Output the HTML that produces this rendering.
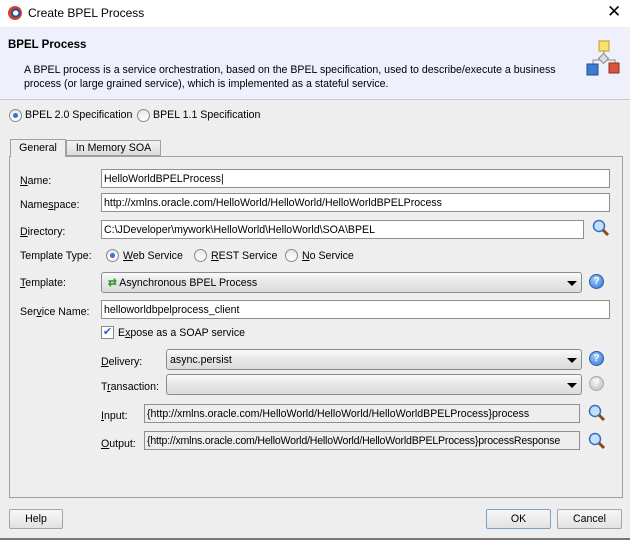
<!DOCTYPE html>
<html><head><style>
*{box-sizing:border-box;margin:0;padding:0}
body{width:630px;height:540px;background:#eeeeee;font-family:"Liberation Sans",sans-serif;font-size:10.6px;color:#000;position:relative;overflow:hidden}
.a{position:absolute;white-space:nowrap}
.l{margin-top:3px}
.inp{position:absolute;background:#fff;border:1px solid #8e8f8f;height:19px;padding:3px 2px 0;line-height:13px;overflow:hidden}
.ro{background:#eeeeee}
.cb{position:absolute;border:1px solid #8c8c8c;border-radius:3px;height:21px;background:linear-gradient(#fafafa,#e6e6e6 50%,#dcdcdc);padding:4px 6px 0;line-height:13px}
.arr{position:absolute;right:4px;top:8px;width:0;height:0;border-left:5px solid transparent;border-right:5px solid transparent;border-top:5px solid #000}
.rad{position:absolute;width:13px;height:13px;border:1px solid #8a8a8a;border-radius:50%;background:linear-gradient(#e8e8e8,#fff)}
.rad.on::after{content:"";position:absolute;left:3px;top:3px;width:5px;height:5px;border-radius:50%;background:#3a6fd0}
.help{position:absolute;width:15px;height:15px;border-radius:50%;background:radial-gradient(circle at 40% 35%,#9fd0ff,#2f6fd0);color:#fff;font-weight:bold;font-size:10px;text-align:center;line-height:14px;border:1px solid #2a5aa8}
.help.dis{background:radial-gradient(circle at 40% 35%,#f0f0f0,#bdbdbd);border-color:#aaa}
.btn{position:absolute;height:20px;border:1px solid #a5a5a5;border-radius:2px;background:linear-gradient(#f7f7f7,#e2e2e2);text-align:center;line-height:18px}
u{text-decoration:underline}
</style></head><body>
<div class="a" style="left:0;top:0;width:630px;height:27px;background:#fff"></div>
<div class="a" style="left:8px;top:6px;width:14px;height:14px;border-radius:50%;background:radial-gradient(circle at 55% 50%,#fff 0 25%,#1d4fb0 26% 45%,#e0401f 46%)"></div>
<div class="a" style="left:28px;top:6px;font-size:12px">Create BPEL Process</div>
<div class="a" style="left:607px;top:2px;font-size:17px">✕</div>
<div class="a" style="left:0;top:28px;width:630px;height:72px;background:#eef1fb;border-bottom:1px solid #c8c8c8"></div>
<div class="a" style="left:8px;top:39px;font-weight:bold;font-size:11.5px">BPEL Process</div>
<div class="a" style="left:24px;top:63px;line-height:14px">A BPEL process is a service orchestration, based on the BPEL specification, used to describe/execute a business<br>process (or large grained service), which is implemented as a stateful service.</div>
<svg class="a" style="left:586px;top:40px" width="36" height="38"><rect x="13" y="1" width="10" height="10" fill="#fbe36a" stroke="#b89a20"/><path d="M18 11v6M7 24v-4h22v4" stroke="#888" fill="none"/><rect x="14" y="15" width="7" height="7" transform="rotate(45 17.5 18.5)" fill="#ddd" stroke="#888"/><rect x="1" y="24" width="11" height="11" fill="#3b7bd0" stroke="#1d4f9a"/><rect x="23" y="23" width="10" height="10" fill="#d8553f" stroke="#9a2a1a"/></svg>
<div class="rad on" style="left:9px;top:109px"></div><div class="a" style="left:25px;top:109px">BPEL 2.0 Specification</div>
<div class="rad" style="left:137px;top:109px"></div><div class="a" style="left:153px;top:109px">BPEL 1.1 Specification</div>
<div class="a" style="left:9px;top:156px;width:614px;height:342px;border:1px solid #a0a0a0"></div>
<div class="a" style="left:10px;top:139px;width:56px;height:18px;border:1px solid #a0a0a0;border-bottom:none;background:#eeeeee;text-align:center;line-height:17px">General</div>
<div class="a" style="left:66px;top:140px;width:95px;height:16px;border:1px solid #a0a0a0;background:linear-gradient(#f4f4f4,#dcdcdc);text-align:center;line-height:15px">In Memory SOA</div>
<div class="a l" style="left:20px;top:172px"><u>N</u>ame:</div>
<div class="inp" style="left:101px;top:169px;width:509px">HelloWorldBPELProcess|</div>
<div class="a l" style="left:20px;top:196px">Name<u>s</u>pace:</div>
<div class="inp" style="left:101px;top:193px;width:509px">http://xmlns.oracle.com/HelloWorld/HelloWorld/HelloWorldBPELProcess</div>
<div class="a l" style="left:20px;top:223px"><u>D</u>irectory:</div>
<div class="inp" style="left:101px;top:220px;width:483px">C:\JDeveloper\mywork\HelloWorld\HelloWorld\SOA\BPEL</div>
<div class="a" style="left:20px;top:250px">Template Type:</div>
<div class="rad on" style="left:106px;top:249px"></div><div class="a" style="left:123px;top:250px"><u>W</u>eb Service</div>
<div class="rad" style="left:194px;top:249px"></div><div class="a" style="left:211px;top:250px"><u>R</u>EST Service</div>
<div class="rad" style="left:285px;top:249px"></div><div class="a" style="left:302px;top:250px"><u>N</u>o Service</div>
<div class="a" style="left:20px;top:277px"><u>T</u>emplate:</div>
<div class="cb" style="left:101px;top:272px;width:481px"><span style="color:#2a9a2a;font-weight:bold">⇄</span> Asynchronous BPEL Process<div class="arr"></div></div>
<div class="help" style="left:589px;top:274px">?</div>
<div class="a l" style="left:20px;top:303px">Ser<u>v</u>ice Name:</div>
<div class="inp" style="left:101px;top:300px;width:509px">helloworldbpelprocess_client</div>
<div class="a" style="left:101px;top:326px;width:13px;height:13px;border:1px solid #8a8a8a;background:#fff;color:#2a62c8;font-size:11px;line-height:11px;text-align:center">✔</div>
<div class="a" style="left:118px;top:327px">E<u>x</u>pose as a SOAP service</div>
<div class="a l" style="left:101px;top:353px"><u>D</u>elivery:</div>
<div class="cb" style="left:166px;top:349px;width:416px;padding-left:3px">async.persist<div class="arr"></div></div>
<div class="help" style="left:589px;top:351px">?</div>
<div class="a l" style="left:101px;top:378px">T<u>r</u>ansaction:</div>
<div class="cb" style="left:166px;top:374px;width:416px"><div class="arr"></div></div>
<div class="help dis" style="left:589px;top:376px">?</div>
<div class="a l" style="left:101px;top:407px"><u>I</u>nput:</div>
<div class="inp ro" style="left:144px;top:404px;width:436px">{http://xmlns.oracle.com/HelloWorld/HelloWorld/HelloWorldBPELProcess}process</div>
<div class="a l" style="left:101px;top:435px"><u>O</u>utput:</div>
<div class="inp ro" style="left:144px;top:431px;width:436px;letter-spacing:-0.2px">{http://xmlns.oracle.com/HelloWorld/HelloWorld/HelloWorldBPELProcess}processResponse</div>
<svg class="a" style="left:592px;top:219px" width="18" height="18"><circle cx="7" cy="7" r="5.5" fill="#bfe0ff" stroke="#3a6fb8" stroke-width="1.5"/><path d="M11 11l5 5" stroke="#8a4a20" stroke-width="3"/></svg>
<svg class="a" style="left:588px;top:404px" width="18" height="18"><circle cx="7" cy="7" r="5.5" fill="#bfe0ff" stroke="#3a6fb8" stroke-width="1.5"/><path d="M11 11l5 5" stroke="#8a4a20" stroke-width="3"/></svg>
<svg class="a" style="left:588px;top:432px" width="18" height="18"><circle cx="7" cy="7" r="5.5" fill="#bfe0ff" stroke="#3a6fb8" stroke-width="1.5"/><path d="M11 11l5 5" stroke="#8a4a20" stroke-width="3"/></svg>
<div class="btn" style="left:9px;top:509px;width:54px">Help</div>
<div class="btn" style="left:486px;top:509px;width:65px;border-color:#7aa0cc">OK</div>
<div class="btn" style="left:557px;top:509px;width:65px">Cancel</div>
<div class="a" style="left:0;top:538px;width:630px;height:2px;background:#777"></div>
</body></html>
